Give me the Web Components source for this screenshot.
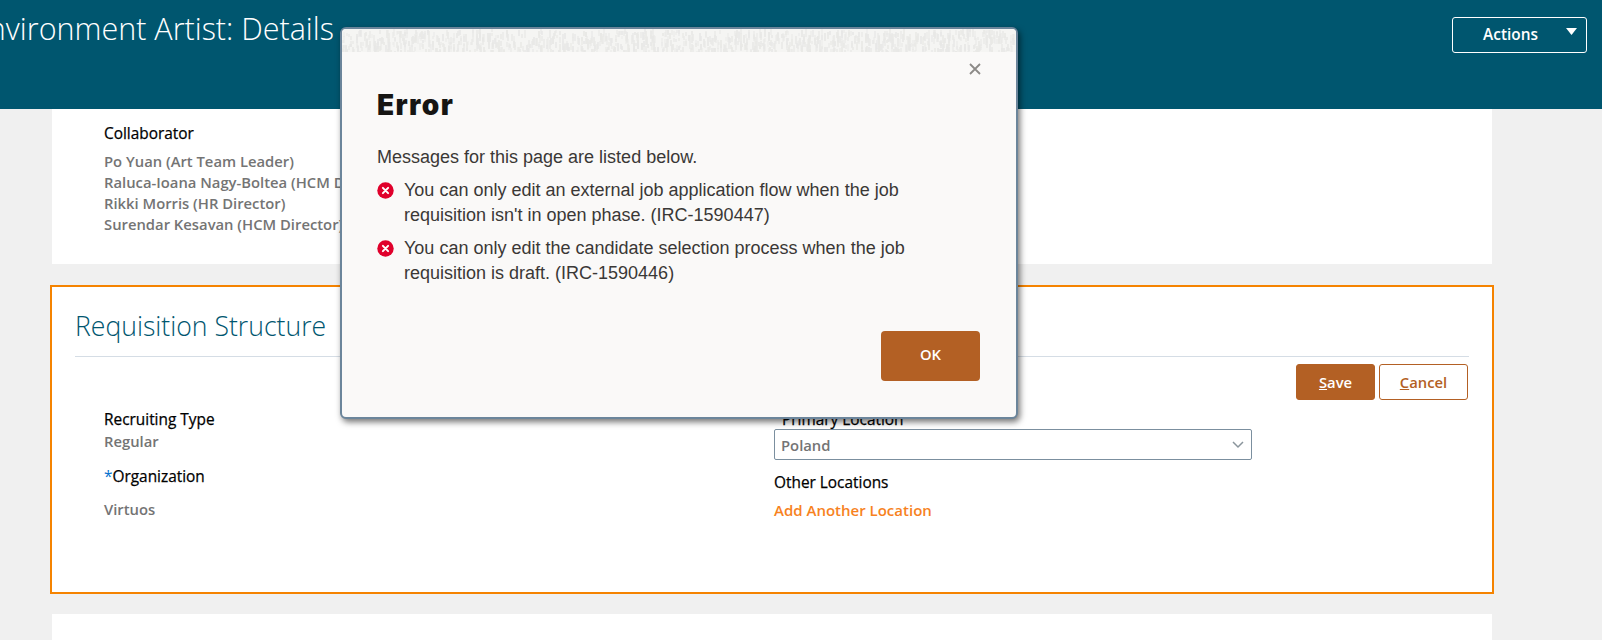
<!DOCTYPE html>
<html lang="en">
<head>
<meta charset="utf-8">
<title>Environment Artist: Details</title>
<style>
  html, body { margin: 0; height: 640px; overflow: hidden; }
  body {
    position: relative;
    width: 1602px;
    background: #f0f0f0;
    font-family: "Open Sans", "Liberation Sans", sans-serif;
    font-size: 14.8px;
  }
</style>
</head>
<body>
<page-header title-text="Environment Artist: Details">
  <action-button>Actions</action-button>
</page-header>

<page-card style="height:155px; padding:14px 0 0 52px;">
  <info-field label="Collaborator" gap="7">
    <div>Po Yuan (Art Team Leader)</div>
    <div>Raluca-Ioana Nagy-Boltea (HCM Director)</div>
    <div>Rikki Morris (HR Director)</div>
    <div>Surendar Kesavan (HCM Director)</div>
  </info-field>
</page-card>

<edit-section heading="Requisition Structure">
  <form-button slot="actions" kind="primary"><u>S</u>ave</form-button>
  <form-button slot="actions"><u>C</u>ancel</form-button>
  <div slot="left">
    <info-field label="Recruiting Type" gap="1">Regular</info-field>
    <info-field label="Organization" required gap="12" style="margin-top:14px">Virtuos</info-field>
  </div>
  <div slot="right">
    <select-field label="Primary Location" value="Poland"></select-field>
    <info-field label="Other Locations" gap="7" style="margin-top:12px">
      <span style="color:#f7821e; font-size:15px">Add Another Location</span>
    </info-field>
  </div>
</edit-section>

<page-card style="height:26px; margin-top:20px;"></page-card>

<error-dialog heading="Error" intro="Messages for this page are listed below.">
  <error-message>You can only edit an external job application flow when the job<br>requisition isn't in open phase. (IRC-1590447)</error-message>
  <error-message>You can only edit the candidate selection process when the job<br>requisition is draft. (IRC-1590446)</error-message>
</error-dialog>

<script>
class PageHeader extends HTMLElement {
  constructor() {
    super();
    this.attachShadow({ mode: "open" });
    this.shadowRoot.innerHTML = `
      <style>
        :host { display: flex; justify-content: space-between; align-items: flex-start;
          height: 109px; background: #00566f; color: #fff; overflow: hidden; }
        h1 { margin: 7px 0 0 -29px; font-size: 30.5px; line-height: 42px; font-weight: 300; white-space: nowrap;
          font-family: "Open Sans", sans-serif; }
        .end { padding: 17px 15px 0 0; }
      </style>
      <h1></h1>
      <div class="end"><slot></slot></div>`;
    this.shadowRoot.querySelector("h1").textContent = this.getAttribute("title-text");
  }
}

class ActionButton extends HTMLElement {
  constructor() {
    super();
    this.attachShadow({ mode: "open" });
    this.shadowRoot.innerHTML = `
      <style>
        :host { display: flex; position: relative; align-items: center; justify-content: center; box-sizing: border-box;
          width: 135px; height: 36px; padding: 0 18px 2px 0; border: 1px solid #fff; border-radius: 3px; color: #fff;
          font-weight: 600; font-size: 15.4px; }
        svg { position: absolute; right: 9px; top: 9px; }
      </style>
      <slot></slot>
      <svg width="11" height="9" viewBox="0 0 11 9"><path d="M0 1h11L5.5 8z" fill="#fff"/></svg>`;
  }
}

class PageCard extends HTMLElement {
  constructor() {
    super();
    this.attachShadow({ mode: "open" });
    this.shadowRoot.innerHTML = `
      <style>
        :host { display: block; box-sizing: border-box; width: 1440px; margin-left: 52px; background: #fff; }
      </style>
      <slot></slot>`;
  }
}

class InfoField extends HTMLElement {
  constructor() {
    super();
    this.attachShadow({ mode: "open" });
    const gap = this.getAttribute("gap") || 0;
    const star = this.hasAttribute("required") ? `<span class="star">*</span>` : "";
    this.shadowRoot.innerHTML = `
      <style>
        :host { display: block; font-size: 14.8px; }
        .label { color: #000; font-size: 15.4px; line-height: 21px; -webkit-text-stroke: .25px #000; }
        .star { color: #0572ce; -webkit-text-stroke: 0; }
        .value { color: #747474; font-weight: 600; line-height: 21px; margin-top: ${gap}px; }
      </style>
      <div class="label">${star}${this.getAttribute("label")}</div>
      <div class="value"><slot></slot></div>`;
  }
}

class SelectField extends HTMLElement {
  constructor() {
    super();
    this.attachShadow({ mode: "open" });
    this.shadowRoot.innerHTML = `
      <style>
        :host { display: block; font-size: 14.8px; }
        .label { color: #000; font-size: 15.4px; line-height: 21px; margin-left: 8px; height: 20px; -webkit-text-stroke: .25px #000; }
        .box { display: flex; align-items: center; justify-content: space-between; box-sizing: border-box;
          width: 478px; height: 31px; padding: 0 7px 0 6px; border: 1px solid #7b8f9f; border-radius: 2px;
          color: #747474; font-weight: 600; }
      </style>
      <div class="label">${this.getAttribute("label")}</div>
      <div class="box">
        <span>${this.getAttribute("value")}</span>
        <svg width="12" height="8" viewBox="0 0 12 8"><path d="M1 1l5 5 5-5" fill="none" stroke="#8a959c" stroke-width="1.5"/></svg>
      </div>`;
  }
}

class FormButton extends HTMLElement {
  constructor() {
    super();
    this.attachShadow({ mode: "open" });
    const primary = this.getAttribute("kind") === "primary";
    this.shadowRoot.innerHTML = `
      <style>
        :host { display: flex; align-items: center; justify-content: center; box-sizing: border-box; height: 36px;
          width: ${primary ? 79 : 89}px; border: 1px solid #b36024; border-radius: 3px; font-weight: 600; font-size: 14.8px;
          background: ${primary ? "#b36024" : "#fff"}; color: ${primary ? "#fff" : "#b36024"}; }
      </style>
      <slot></slot>`;
  }
}

class EditSection extends HTMLElement {
  constructor() {
    super();
    this.attachShadow({ mode: "open" });
    this.shadowRoot.innerHTML = `
      <style>
        :host { display: block; box-sizing: border-box; width: 1444px; height: 309px; margin: 21px 0 0 50px;
          padding: 0 23px 0 23px; background: #fff; border: 2px solid #f58300; }
        h2 { margin: 0; height: 70px; padding-top: 19px; box-sizing: border-box; border-bottom: 1px solid #d5dde5;
          font-size: 26.6px; line-height: 40px; font-weight: 300; color: #00566f; }
        .actions { display: flex; justify-content: flex-end; gap: 4px; margin: 7px 1px 0 0; }
        .cols { display: grid; grid-template-columns: 670px 1fr; margin-top: 9px; padding-left: 29px; }
      </style>
      <h2>${this.getAttribute("heading")}</h2>
      <div class="actions"><slot name="actions"></slot></div>
      <div class="cols">
        <div><slot name="left"></slot></div>
        <div><slot name="right"></slot></div>
      </div>`;
  }
}

class ErrorMessage extends HTMLElement {
  constructor() {
    super();
    this.attachShadow({ mode: "open" });
    this.shadowRoot.innerHTML = `
      <style>
        :host { display: flex; gap: 10px; align-items: flex-start; margin-top: 8px; }
        svg { flex: none; margin-top: 4px; }
      </style>
      <svg width="17" height="17" viewBox="0 0 17 17">
        <circle cx="8.5" cy="8.5" r="8.2" fill="#e0002b"/>
        <path d="M5.9 5.9l5.2 5.2M11.1 5.9l-5.2 5.2" stroke="#fff" stroke-width="2" stroke-linecap="round"/>
      </svg>
      <div><slot></slot></div>`;
  }
}

// speckled band along the top of the dialog
function stripMarks() {
  let seed = 7, out = "";
  const rnd = () => (seed = (seed * 16807) % 2147483647) / 2147483647;
  for (let i = 0; i < 1100; i++) {
    const x = Math.round(rnd() * 674), y = Math.round(rnd() * 22), h = 3 + Math.round(rnd() * 6);
    out += `<rect x="${x}" y="${y}" width="2" height="${h}" fill="#e8e8e6" opacity="${(0.4 + rnd() * 0.5).toFixed(2)}"/>`;
  }
  return out;
}

class ErrorDialog extends HTMLElement {
  constructor() {
    super();
    this.attachShadow({ mode: "open" });
    this.shadowRoot.innerHTML = `
      <style>
        :host { display: block; position: absolute; left: 340px; top: 27px; width: 678px; height: 392px; box-sizing: border-box;
          border: 2px solid #6b859b; border-radius: 6px; background: #faf9f8;
          box-shadow: 2px 3px 6px rgba(0,0,0,.55);
          font-family: "Liberation Sans", Arial, sans-serif; color: #3a3836; font-size: 18px; line-height: 25px; }
        .strip { display: block; width: 100%; height: 23px; background: #f5f5f3; border-radius: 4px 4px 0 0; }
        .close { display: flex; justify-content: flex-end; padding: 10px 34px 0 0; height: 15px; }
        .body { padding: 0 35px; }
        h3 { margin: 11px 0 0; font-family: Inter, "Liberation Sans", sans-serif; font-size: 28px; line-height: 34px;
          font-weight: 900; letter-spacing: 1.4px; color: #161513; }
        p { margin: 23px 0 0; }
        .foot { display: flex; justify-content: flex-end; margin: 45px 1px 0 0; }
        .ok { display: flex; align-items: center; justify-content: center; box-sizing: border-box; width: 99px; height: 50px;
          padding-bottom: 3px; border-radius: 4px;
          background: #b36024; color: #fff; font-family: "Open Sans", sans-serif; font-size: 14.8px; font-weight: 600; }
      </style>
      <svg class="strip" viewBox="0 0 674 23" preserveAspectRatio="none">${stripMarks()}</svg>
      <div class="close">
        <svg width="14" height="14" viewBox="0 0 14 14"><path d="M2 2l10 10M12 2L2 12" stroke="#8c8a87" stroke-width="1.8"/></svg>
      </div>
      <div class="body">
        <h3>${this.getAttribute("heading")}</h3>
        <p>${this.getAttribute("intro")}</p>
        <slot></slot>
        <div class="foot"><div class="ok">OK</div></div>
      </div>`;
  }
}

customElements.define("page-header", PageHeader);
customElements.define("action-button", ActionButton);
customElements.define("page-card", PageCard);
customElements.define("info-field", InfoField);
customElements.define("select-field", SelectField);
customElements.define("form-button", FormButton);
customElements.define("edit-section", EditSection);
customElements.define("error-message", ErrorMessage);
customElements.define("error-dialog", ErrorDialog);
</script>
</body>
</html>
